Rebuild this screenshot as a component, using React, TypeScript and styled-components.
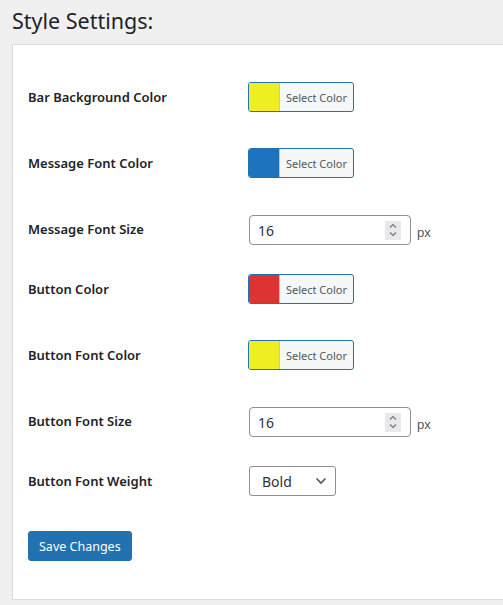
import styled, { createGlobalStyle } from 'styled-components';

/*
 * Types
 */

type Field =
  | { kind: 'color'; label: string; value: string }
  | { kind: 'number'; label: string; value: number }
  | { kind: 'select'; label: string; value: string };

const fields: Field[] = [
  { kind: 'color', label: 'Bar Background Color', value: '#eeee22' },
  { kind: 'color', label: 'Message Font Color', value: '#1e73be' },
  { kind: 'number', label: 'Message Font Size', value: 16 },
  { kind: 'color', label: 'Button Color', value: '#dd3333' },
  { kind: 'color', label: 'Button Font Color', value: '#eeee22' },
  { kind: 'number', label: 'Button Font Size', value: 16 },
  { kind: 'select', label: 'Button Font Weight', value: 'Bold' },
];

// top / bottom padding of the field cell, per kind of control
const cellPad = {
  color: [14, 22],
  number: [15, 15],
  select: [14, 16],
};

/*
 * App
 */

export default function App() {
  return (
    <>
      <GlobalStyle />
      <Page>
        <Heading>Style Settings:</Heading>
        <Card>
          {fields.map((f) => (
            <Row key={f.label}>
              <Label>{f.label}</Label>
              <Cell $top={cellPad[f.kind][0]} $bottom={cellPad[f.kind][1]}>
                {f.kind === 'color' && <ColorPicker color={f.value} />}
                {f.kind === 'number' && <NumberField value={f.value} />}
                {f.kind === 'select' && <SelectField value={f.value} />}
              </Cell>
            </Row>
          ))}
          <Submit>
            <SaveButton type="button">Save Changes</SaveButton>
          </Submit>
        </Card>
      </Page>
    </>
  );
}

const ColorPicker = ({ color }: { color: string }) => (
  <ColorButton type="button">
    <Swatch $color={color} />
    <ColorText>Select Color</ColorText>
  </ColorButton>
);

const NumberField = ({ value }: { value: number }) => (
  <NumberWrap>
    <NumberBox>
      <NumberValue>{value}</NumberValue>
      <Spinner>
        <svg width="10" height="18" viewBox="0 0 10 18" fill="none" stroke="#757575" strokeWidth="1.2">
          <path d="M2 6.5 L5 3.5 L8 6.5" />
          <path d="M2 11.5 L5 14.5 L8 11.5" />
        </svg>
      </Spinner>
    </NumberBox>
    <Unit>px</Unit>
  </NumberWrap>
);

const SelectField = ({ value }: { value: string }) => (
  <SelectBox>
    <span>{value}</span>
    <svg width="12" height="8" viewBox="0 0 12 8" fill="none" stroke="#50575e" strokeWidth="1.6">
      <path d="M1.5 1.5 L6 6 L10.5 1.5" />
    </svg>
  </SelectBox>
);

/*
 * Styles
 */

const GlobalStyle = createGlobalStyle`
  body {
    margin: 0;
    background: #f0f0f1;
    font-family: "Noto Sans", "Open Sans", sans-serif;
    color: #1d2327;
  }
`;

const Page = styled.div`
  padding: 6px 0 0 12px;
  overflow: hidden;
`;

const Heading = styled.h2`
  margin: 0 0 8px;
  font-size: 21.5px;
  font-weight: 400;
  line-height: 30px;
  color: #1d2327;
`;

const Card = styled.div`
  width: 520px;
  background: #fff;
  border: 1px solid #dcdcde;
  box-shadow: 0 1px 1px rgba(0, 0, 0, 0.04);
  padding: 23px 0 38px 15px;
`;

const Row = styled.div`
  display: grid;
  grid-template-columns: 220px 1fr;
  align-items: start;
`;

const Label = styled.div`
  padding-top: 20px;
  font-size: 13px;
  font-weight: 600;
  line-height: 18px;
  color: #1d2327;
`;

const Cell = styled.div<{ $top: number; $bottom: number }>`
  padding-top: ${(p) => p.$top}px;
  padding-bottom: ${(p) => p.$bottom}px;
  display: flex;
  align-items: center;
`;

const ColorButton = styled.button`
  display: flex;
  align-items: stretch;
  width: 106px;
  height: 30px;
  padding: 0;
  border: 1px solid #2271b1;
  border-radius: 3px;
  background: #f6f7f7;
  overflow: hidden;
  cursor: pointer;
`;

const Swatch = styled.span<{ $color: string }>`
  width: 30px;
  background: ${(p) => p.$color};
  border-right: 1px solid #c3c4c7;
`;

const ColorText = styled.span`
  flex: 1;
  display: flex;
  align-items: center;
  justify-content: center;
  font-family: "Noto Sans", sans-serif;
  font-size: 11px;
  color: #50575e;
`;

const NumberWrap = styled.div`
  display: flex;
  align-items: center;
  gap: 6px;
  margin-left: 1px;
`;

const NumberBox = styled.div`
  display: flex;
  align-items: center;
  justify-content: space-between;
  box-sizing: border-box;
  width: 162px;
  height: 30px;
  padding: 0 9px 0 8px;
  border: 1px solid #8c8f94;
  border-radius: 4px;
  background: #fff;
`;

const NumberValue = styled.span`
  font-size: 14px;
  color: #2c3338;
`;

const Spinner = styled.span`
  display: flex;
  align-items: center;
  justify-content: center;
  width: 16px;
  height: 19px;
  background: #e9e9ed;
`;

const Unit = styled.span`
  font-family: "Liberation Sans", Arial, sans-serif;
  font-size: 13px;
  color: #50575e;
  margin-top: 4px;
`;

const SelectBox = styled.div`
  display: flex;
  align-items: center;
  justify-content: space-between;
  box-sizing: border-box;
  width: 87px;
  height: 30px;
  margin-left: 1px;
  padding: 0 8px 0 12px;
  border: 1px solid #8c8f94;
  border-radius: 3px;
  background: #fff;
  font-size: 14px;
  color: #2c3338;
`;

const Submit = styled.div`
  padding-top: 19px;
`;

const SaveButton = styled.button`
  height: 30px;
  padding: 0 10px;
  border: 1px solid #2271b1;
  border-radius: 3px;
  background: #2271b1;
  color: #fff;
  font-family: "Noto Sans", sans-serif;
  font-size: 12.5px;
  cursor: pointer;
`;
